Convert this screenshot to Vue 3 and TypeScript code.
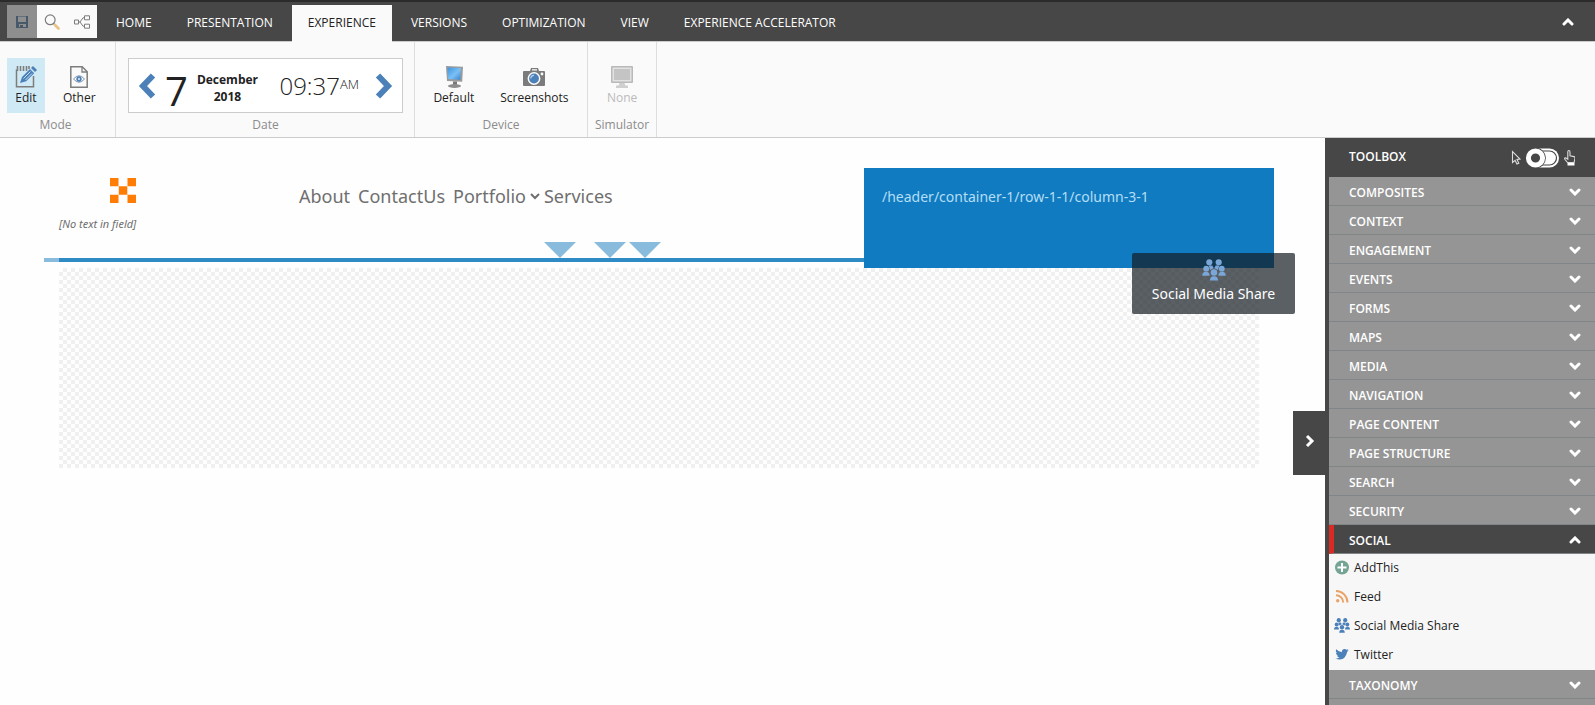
<script setup lang="ts">
import { ref } from 'vue'

const tabs: string[] = [
  'HOME', 'PRESENTATION', 'EXPERIENCE', 'VERSIONS', 'OPTIMIZATION', 'VIEW', 'EXPERIENCE ACCELERATOR',
]
const activeTab = ref('EXPERIENCE')

const sections: string[] = [
  'COMPOSITES', 'CONTEXT', 'ENGAGEMENT', 'EVENTS', 'FORMS', 'MAPS', 'MEDIA', 'NAVIGATION',
  'PAGE CONTENT', 'PAGE STRUCTURE', 'SEARCH', 'SECURITY', 'SOCIAL', 'TAXONOMY',
]
const openSection = ref('SOCIAL')
const tapMode = ref(false)

interface Tool { id: string; label: string }
const socialTools: Tool[] = [
  { id: 'add', label: 'AddThis' },
  { id: 'feed', label: 'Feed' },
  { id: 'share', label: 'Social Media Share' },
  { id: 'twitter', label: 'Twitter' },
]

function toggleSection(name: string): void {
  openSection.value = openSection.value === name ? '' : name
}
</script>

<template>
  <div class="editor">
    <header class="topbar">
      <div class="quick">
        <button class="quick-btn save" type="button" aria-label="Save">
          <svg width="14" height="14" viewBox="0 0 14 14">
            <path fill="#46596b" d="M1 1h2v6h8V1h2v12h-2V9H4v4H1z" />
            <path fill="#64707b" d="M3 1h8v1H3z" />
            <path fill="#46596b" d="M5 10h3v3H5zM4 12h7v1H4z" />
          </svg>
        </button>
        <button class="quick-btn" type="button" aria-label="Search">
          <svg width="16" height="16" viewBox="0 0 16 16" fill="none">
            <circle cx="6.200" cy="5.800" r="4.900" stroke="#7d7d7d" stroke-width="1.200" />
            <path d="M9.600 9.400l1.600 1.700" stroke="#7d7d7d" stroke-width="1.500" />
            <path d="M11 11l3.500 3.500" stroke="#eac282" stroke-width="2.600" stroke-linecap="round" />
          </svg>
        </button>
        <button class="quick-btn" type="button" aria-label="Navigate">
          <svg width="16" height="14" viewBox="0 0 16 14" fill="none" stroke="#7d7d7d">
            <path d="M.5 5h4v4h-4zM10.500 .8h5v4h-5zM10.500 9.200h5v4h-5zM4.500 7h1.500l3-4.200h1.500M6 7l3 4.200h1.500" />
          </svg>
        </button>
      </div>
      <nav class="tabs">
        <button v-for="tab in tabs" :key="tab" type="button" class="tab" :class="{ active: tab === activeTab }"
          @click="activeTab = tab">{{ tab }}</button>
      </nav>
      <button class="bar-toggle" type="button" aria-label="Collapse ribbon">
        <svg class="chev" viewBox="0 0 12 8"><path d="M2 6l4-4 4 4" /></svg>
      </button>
    </header>

    <div class="ribbon">
      <section class="group mode">
        <div class="group-body">
          <button class="tool selected" type="button">
            <svg width="22" height="22" viewBox="0 0 22 22">
              <path d="M1.500 3.500v17.300h17V10" fill="none" stroke="#7d7d7d" stroke-width="1.500" />
              <path d="M2.500 0v5M5.500 0v5M8.500 0v5M11.500 0v5M14 0v3" stroke="#7d7d7d" stroke-width="1.600" />
              <path d="M5 17l2-6 8-8 4.200 4.200-8 8z" fill="#4b80b9" />
              <path d="M16 2l2-2 4 4-2 2z" fill="#4b80b9" />
              <path d="M8.500 12.500l7-7M10.500 14l6.500-6.500" stroke="#d3e9f4" stroke-width=".9" />
            </svg>
            <span>Edit</span>
          </button>
          <button class="tool" type="button">
            <svg width="22" height="22" viewBox="0 0 22 22" fill="none">
              <path d="M2.800 .8h11.400l5 5v15.400H2.800z" stroke="#7d7d7d" stroke-width="1.500" />
              <path d="M14 1v5h5" stroke="#7d7d7d" stroke-width="1.300" />
              <path d="M5.500 13q5.500-6.500 11 0-5.500 6.500-11 0z" stroke="#7d94ab" stroke-width="1" />
              <circle cx="11" cy="13" r="2.700" fill="#4b80b9" />
              <circle cx="11" cy="13" r="1" fill="#e8f0f8" />
            </svg>
            <span>Other</span>
          </button>
        </div>
        <h2 class="group-name">Mode</h2>
      </section>

      <section class="group date">
        <div class="datebox">
          <button class="step" type="button" aria-label="Previous day">
            <svg width="18" height="26" viewBox="0 0 18 26"><path d="M15 2.500L5 13l10 10.500" /></svg>
          </button>
          <span class="day">7</span>
          <span class="month">December<br>2018</span>
          <span class="time">09:37<sup>AM</sup></span>
          <button class="step" type="button" aria-label="Next day">
            <svg width="18" height="26" viewBox="0 0 18 26"><path d="M3 2.500L13 13 3 23.500" /></svg>
          </button>
        </div>
        <h2 class="group-name">Date</h2>
      </section>

      <section class="group device">
        <div class="group-body">
          <button class="tool" type="button">
            <svg width="22" height="22" viewBox="0 0 22 22">
              <defs>
                <linearGradient id="screen" x1="0" y1="0" x2="1" y2="1">
                  <stop offset="0" stop-color="#3e93de" /><stop offset=".55" stop-color="#7bc0f5" /><stop offset="1" stop-color="#3583d0" />
                </linearGradient>
              </defs>
              <path d="M3 0l17 .8-.8 15L4 15z" fill="#9b9b9b" />
              <path d="M4.500 1.500l13.500.5-.7 11.800L5 13z" fill="url(#screen)" />
              <path d="M10 15.500h4v4h-4z" fill="#777" />
              <ellipse cx="11.500" cy="20" rx="6.500" ry="1.900" fill="#8c8c8c" />
            </svg>
            <span>Default</span>
          </button>
          <button class="tool" type="button">
            <svg width="22" height="22" viewBox="0 0 22 22">
              <path d="M1 5h6l1-3h7l1 3h5q1 0 1 1v13q0 1-1 1H1q-1 0-1-1V6q0-1 1-1z" fill="#7b7b7b" />
              <path d="M9 3.200h5v1.300H9z" fill="#fafafa" />
              <circle cx="11" cy="12.500" r="6.400" fill="#fafafa" />
              <circle cx="11" cy="12.500" r="4.900" fill="#4b80b9" />
              <path d="M7.800 12.500a3.200 3.200 0 0 1 3.200-3.200" stroke="#b9d2ea" stroke-width="1.200" fill="none" />
              <circle cx="19" cy="8" r="1.400" fill="#fafafa" />
            </svg>
            <span>Screenshots</span>
          </button>
        </div>
        <h2 class="group-name">Device</h2>
      </section>

      <section class="group simulator">
        <div class="group-body">
          <button class="tool" type="button" disabled>
            <svg width="22" height="22" viewBox="0 0 22 22">
              <rect x="0" y="0" width="22" height="17" rx="1" fill="#b9b9b9" />
              <rect x="1.500" y="1.500" width="19" height="14" fill="#e2e2e2" />
              <rect x="3" y="3" width="16" height="11" fill="#c4c4c4" />
              <path d="M8.500 17h5l1 2.500h2.500V22H5v-2.500h2.500z" fill="#cfcfcf" />
            </svg>
            <span>None</span>
          </button>
        </div>
        <h2 class="group-name">Simulator</h2>
      </section>
    </div>

    <div class="workspace">
      <main class="canvas">
        <div class="row">
          <div class="brand">
            <svg width="26" height="25" viewBox="0 0 26 25" fill="#ff7d05" role="img" aria-label="Logo">
              <path d="M0 0h8.500v8.300H0zM17.500 0H26v8.300h-8.500zM8.800 8.300h8.500v8.400H8.800zM0 16.700h8.500V25H0zM17.500 16.700H26V25h-8.500z" />
            </svg>
            <p class="empty-text">[No text in field]</p>
          </div>
          <nav class="site-nav">
            <a href="#about">About</a>
            <a href="#contact">ContactUs</a>
            <a href="#portfolio" class="has-menu">Portfolio
              <svg class="caret" viewBox="0 0 10 8"><path d="M1 2l4 4 4-4" /></svg>
            </a>
            <a href="#services">Services</a>
          </nav>
          <div class="drop-target">/header/container-1/row-1-1/column-3-1</div>
          <div class="insert-line"></div>
          <i class="marker first"></i>
          <i class="marker second"></i>
          <i class="marker third"></i>
          <div class="drag-card">
            <svg width="24" height="22" viewBox="0 0 16 15" fill="#7aa6d8"><use href="#people" /></svg>
            <span>Social Media Share</span>
          </div>
        </div>
        <div class="placeholder"></div>
      </main>

      <aside class="toolbox">
        <button class="handle" type="button" aria-label="Hide toolbox">
          <svg width="10" height="14" viewBox="0 0 10 14"><path d="M2 2l5 5-5 5" /></svg>
        </button>
        <div class="toolbox-head">
          <h2>TOOLBOX</h2>
          <label class="switch">
            <input v-model="tapMode" type="checkbox" aria-label="Tap mode">
            <svg width="64" height="20" viewBox="0 0 64 20" fill="none">
              <path d="M1.500 3.500v11l2.600-2.200 1.800 3.800 1.900-.9L6 11.500l3-.4z" stroke="#ddd" stroke-width="1.100" />
              <rect x="15" y=".5" width="33" height="19" rx="9.500" fill="#fff" />
              <path d="M30 3h8.500a7 7 0 0 1 0 14H30q7-7 0-14z" stroke="#474747" stroke-width="1.200" />
              <circle cx="24.500" cy="10" r="10.400" fill="#474747" />
              <circle cx="24.500" cy="10" r="7.100" stroke="#fff" stroke-width="5" />
              <path d="M56.500 14.500l-2.500-3q-1-1.800.6-1.600l2.200 1.400V4q0-1.500 1.100-1.500T59 4v3.800l4 .8q1 .3 1 1.600l-.9 4.300z" stroke="#ddd" stroke-width="1.100" />
              <path d="M56.500 15h7v2.500h-7z" fill="#fff" />
            </svg>
          </label>
        </div>
        <template v-for="name in sections" :key="name">
          <button type="button" class="section" :class="{ open: name === openSection }" @click="toggleSection(name)">
            <span>{{ name }}</span>
            <svg class="chev" viewBox="0 0 12 8"><path :d="name === openSection ? 'M2 6l4-4 4 4' : 'M2 2l4 4 4-4'" /></svg>
          </button>
          <ul v-if="name === 'SOCIAL' && openSection === name" class="tools">
            <li v-for="tool in socialTools" :key="tool.id">
              <button type="button">
                <svg v-if="tool.id === 'add'" width="16" height="15" viewBox="0 0 16 15">
                  <circle cx="8" cy="7.500" r="7" fill="#74a492" /><path d="M8 3v9M3.500 7.500h9" stroke="#fff" stroke-width="2" />
                </svg>
                <svg v-else-if="tool.id === 'feed'" width="16" height="15" viewBox="0 0 16 15" fill="none" stroke="#e9a267" stroke-width="2">
                  <circle cx="3.700" cy="11.800" r="1.700" fill="#e9a267" stroke="none" />
                  <path d="M2 6.200a7.200 7.200 0 0 1 7.200 7.300M2 2a11.500 11.500 0 0 1 11.500 11.500" />
                </svg>
                <svg v-else-if="tool.id === 'share'" width="16" height="15" viewBox="0 0 16 15" fill="#4b80b9">
                  <g id="people">
                    <circle cx="4.800" cy="2.200" r="2.100" /><circle cx="11.200" cy="2.200" r="2.100" />
                    <circle cx="2.700" cy="6.600" r="2" /><circle cx="13.300" cy="6.600" r="2" />
                    <circle cx="8" cy="9.200" r="2.200" />
                    <path d="M0 11.500q0-2.800 2.500-2.800T5 11.500zM11 11.500q0-2.800 2.500-2.800t2.500 2.800zM5.200 14.700q0-3 2.800-3t2.800 3zM4.300 4.500h2.500l1 1.700-2.400 1.300zM11.700 4.500H9.200l-1 1.700 2.400 1.300z" />
                  </g>
                </svg>
                <svg v-else width="16" height="15" viewBox="0 0 24 22" fill="#4b80b9">
                  <path d="M22 4.500q-1 .5-2.300.7 1.300-.8 1.800-2.300-1.200.8-2.600 1.100a4.100 4.100 0 0 0-7 3.700Q7 7.500 3.500 3.300a4.100 4.100 0 0 0 1.300 5.500q-1 0-1.900-.5a4.100 4.100 0 0 0 3.300 4.100q-.9.200-1.800.1a4.100 4.100 0 0 0 3.800 2.800A8.200 8.200 0 0 1 2 17q14 6 18-10.500 1.200-.9 2-2z" />
                </svg>
                <span>{{ tool.label }}</span>
              </button>
            </li>
          </ul>
        </template>
        <div class="section-rest"></div>
      </aside>
    </div>
  </div>
</template>

<style>
html, body { margin: 0; background: #fefefe; }
body { overflow: hidden; }
</style>

<style scoped>
.editor {
  display: flex; flex-direction: column; height: 100vh; overflow: hidden;
  font: 12px/20px "Open Sans", sans-serif; color: #222;
}
button { margin: 0; padding: 0; border: 0; background: none; font: inherit; color: inherit; cursor: pointer; }
h2, p, ul { margin: 0; padding: 0; font: inherit; list-style: none; }
a { color: inherit; text-decoration: none; }
svg { display: block; flex: none; }

.topbar { display: flex; height: 36px; padding: 3px 0 0 7px; border-top: 2px solid #2b2b2b; border-bottom: 1px solid #ccc; background: #474747; flex: none; }
.quick { display: flex; height: 33px; margin-right: 3px; background: #fafafa; }
.quick-btn { display: flex; width: 30px; align-items: center; justify-content: center; }
.quick-btn.save { background: #8e8e8e; }
.tabs { display: flex; gap: 3px; margin-bottom: -1px; }
.tab { padding: 0 16px 1px; color: #fff; font-weight: 500; }
.tab.active { background: #fafafa; color: #222; font-weight: 400; }
.bar-toggle { display: flex; align-items: center; margin: 0 21px 3px auto; }
.chev { width: 12px; height: 8px; fill: none; stroke: #fff; stroke-width: 3; stroke-linecap: round; }

.ribbon { display: flex; height: 95px; flex: none; background: #fafafa; border-bottom: 1px solid #ccc; }
.group { display: flex; flex-direction: column; padding: 16px 7px 0; border-right: 1px solid #ddd; }
.group-body { display: flex; gap: 10px; height: 55px; justify-content: center; }
.mode .group-body { justify-content: flex-start; }
.mode { width: 97px; padding-right: 11px; }
.date { padding: 16px 11px 0 12px; }
.device { width: 158px; }
.tool { display: flex; flex-direction: column; align-items: center; padding: 8px 8px 0; }
.tool.selected { background: #d0eaf5; }
.tool:disabled { color: #bbb; }
.group-name { margin-top: 2px; color: #8c8c8c; text-align: center; }
.datebox { display: flex; align-items: center; gap: 9px; width: 255px; height: 53px; padding: 0 9px; border: 1px solid #ccc; background: #fff; }
.step svg { fill: none; stroke: #4b80b9; stroke-width: 6; }
.day { font-size: 40px; line-height: 53px; padding-top: 10px; }
.month { padding-top: 4px; font-weight: 700; line-height: 17px; text-align: center; }
.time { margin: 0 7px 0 auto; font-size: 24px; font-weight: 300; line-height: 32px; }
.time sup { font-size: 13px; line-height: 1px; vertical-align: 6px; }

.workspace { display: flex; flex: 1; min-height: 0; }
.canvas { flex: 1; min-width: 0; padding: 30px 51px 0 44px; font-family: "Noto Sans", sans-serif; color: #6f6f6f; }
.row { position: relative; display: grid; grid-template-columns: 2fr 6fr 4fr; height: 100px; }
.brand { display: flex; flex-direction: column; align-items: flex-end; justify-self: start; padding: 10px 0 0 15px; gap: 11px; }
.empty-text { font-size: 11px; font-style: italic; line-height: 20px; }
.site-nav { display: flex; gap: 8px; padding: 14px 0 0 50px; font-size: 18px; line-height: 28px; align-items: flex-start; }
.has-menu { display: flex; align-items: center; gap: 4px; margin-right: -4px; }
.caret { width: 10px; height: 8px; fill: none; stroke: currentColor; stroke-width: 2; }
.drop-target { padding: 18px; background: #107bc0; color: #b3def5; font-size: 14px; line-height: 22px; z-index: 1; }
.insert-line { position: absolute; left: 0; right: 410px; bottom: 6px; height: 4px; background: linear-gradient(to right, #89bcdc 15px, #2e8bc5 15px); }
.marker { position: absolute; bottom: 10px; border: 16px solid transparent; border-top-color: #89bcdc; border-bottom: 0; }
.first { left: 500px; }
.second { left: 550px; }
.third { left: 585px; }
.drag-card {
  position: absolute; right: -21px; top: 85px; z-index: 2; box-sizing: border-box; width: 163px; height: 61px;
  display: flex; flex-direction: column; align-items: center; gap: 2px; padding-top: 6px;
  border-radius: 2px; background: rgba(22, 29, 35, .7); color: #fff; font-size: 14px; line-height: 22px;
}
.placeholder { height: 200px; margin: 0 15px; background: repeating-conic-gradient(#f0f0f0 0 25%, #fefefe 0 50%) 0 0 / 8px 8px; }

.toolbox { position: relative; display: flex; flex-direction: column; width: 266px; border-left: 4px solid #474747; background: #474747; color: #fff; font-weight: 600; }
.handle { position: absolute; left: -36px; top: 273px; display: flex; width: 34px; height: 64px; align-items: center; padding: 0 0 4px 12px; box-sizing: border-box; background: #474747; }
.handle svg { fill: none; stroke: #fff; stroke-width: 3; }
.toolbox-head { display: flex; align-items: center; justify-content: space-between; height: 39px; padding: 0 20px; flex: none; }
.toolbox-head h2 { padding-bottom: 2px; }
.switch { position: relative; }
.switch input { position: absolute; inset: 0; width: 100%; height: 100%; margin: 0; opacity: 0; }
.section { display: flex; align-items: center; justify-content: space-between; flex: none; height: 29px; padding: 2px 14px 0 20px; background: #959595; border-bottom: 1px solid #808687; }
.section span { padding-top: 2px; }
.section.open { padding-left: 15px; border-left: 5px solid #d92b24; background: #474747; }
.tools { background: #f7f7f7; color: #222; font-weight: 400; flex: none; }
.tools button { display: flex; width: 100%; height: 29px; align-items: center; gap: 4px; padding: 0 0 2px 5px; }
.section-rest { flex: 1; background: #959595; }
</style>
